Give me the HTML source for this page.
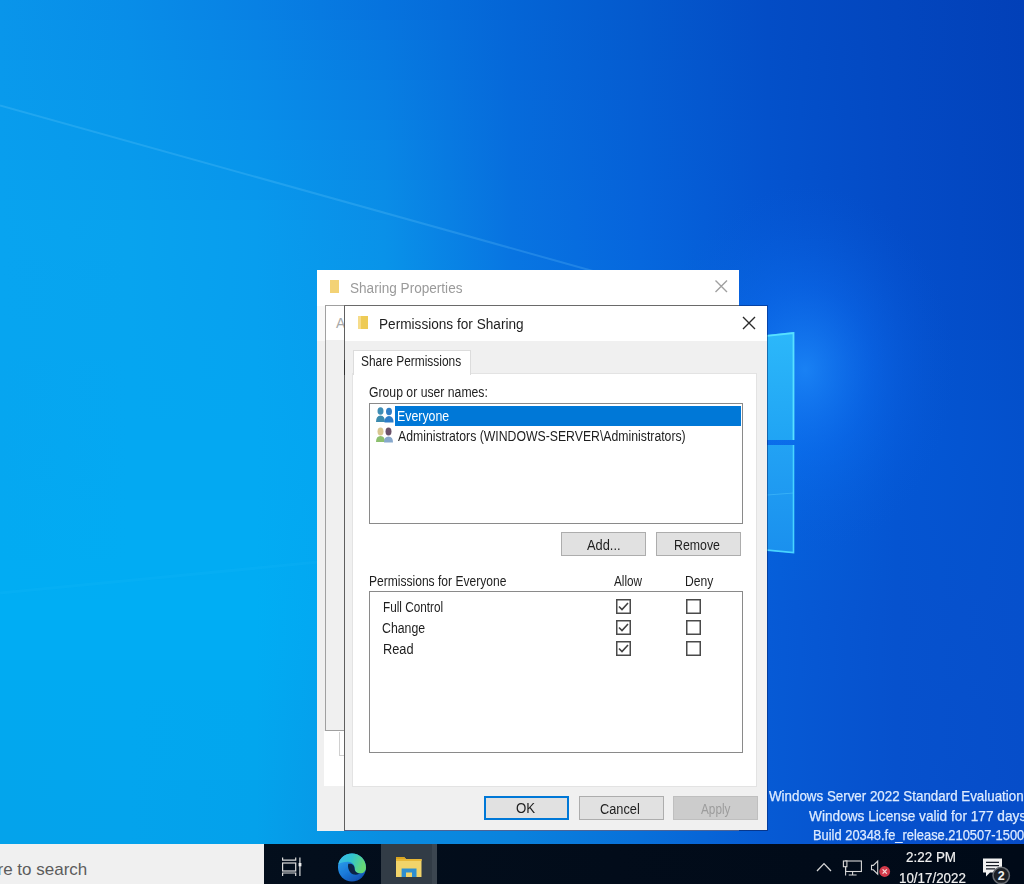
<!DOCTYPE html>
<html><head><meta charset="utf-8">
<style>
*{margin:0;padding:0;box-sizing:border-box}
html,body{width:1024px;height:884px;overflow:hidden}
body{position:relative;font-family:"Liberation Sans",sans-serif;background:#0a6fdc}
.abs{position:absolute}
#bg{position:absolute;left:0;top:0;width:1024px;height:844px;overflow:hidden;
 background:linear-gradient(90deg,#0b9cef 0%,#0a8fe9 25%,#0a74de 50%,#0858cf 75%,#064bc4 100%)}
.t{position:absolute;white-space:nowrap;transform-origin:0 0;line-height:1}
.ui{color:#1e1e1e;font-size:14px}
#tb{position:absolute;left:0;top:844px;width:1024px;height:40px;background:linear-gradient(90deg,#04101e,#020c1a 60%,#000a18)}
</style></head><body>
<div id="bg">
<svg width="1024" height="844" viewBox="0 0 1024 844" style="position:absolute;left:0;top:0">
<defs><linearGradient id="r0" x1="0" y1="0" x2="1" y2="0"><stop offset="0.000" stop-color="#0995ea"/><stop offset="0.125" stop-color="#088de8"/><stop offset="0.250" stop-color="#0881e4"/><stop offset="0.375" stop-color="#0673de"/><stop offset="0.500" stop-color="#0465d6"/><stop offset="0.625" stop-color="#0459cd"/><stop offset="0.750" stop-color="#034cc5"/><stop offset="0.875" stop-color="#0346be"/><stop offset="1.000" stop-color="#0240b8"/></linearGradient><linearGradient id="r1" x1="0" y1="0" x2="1" y2="0"><stop offset="0.000" stop-color="#0996eb"/><stop offset="0.125" stop-color="#088fe9"/><stop offset="0.250" stop-color="#0884e5"/><stop offset="0.375" stop-color="#0776df"/><stop offset="0.500" stop-color="#0566d7"/><stop offset="0.625" stop-color="#045ace"/><stop offset="0.750" stop-color="#034dc6"/><stop offset="0.875" stop-color="#0347bf"/><stop offset="1.000" stop-color="#0241b9"/></linearGradient><linearGradient id="r2" x1="0" y1="0" x2="1" y2="0"><stop offset="0.000" stop-color="#0997eb"/><stop offset="0.125" stop-color="#0891e9"/><stop offset="0.250" stop-color="#0886e6"/><stop offset="0.375" stop-color="#0779e0"/><stop offset="0.500" stop-color="#0567d8"/><stop offset="0.625" stop-color="#045bcf"/><stop offset="0.750" stop-color="#034ec7"/><stop offset="0.875" stop-color="#0347c0"/><stop offset="1.000" stop-color="#0241ba"/></linearGradient><linearGradient id="r3" x1="0" y1="0" x2="1" y2="0"><stop offset="0.000" stop-color="#0999ec"/><stop offset="0.125" stop-color="#0893ea"/><stop offset="0.250" stop-color="#0889e7"/><stop offset="0.375" stop-color="#077be1"/><stop offset="0.500" stop-color="#0568d9"/><stop offset="0.625" stop-color="#055cd1"/><stop offset="0.750" stop-color="#034fc8"/><stop offset="0.875" stop-color="#0348c1"/><stop offset="1.000" stop-color="#0242ba"/></linearGradient><linearGradient id="r4" x1="0" y1="0" x2="1" y2="0"><stop offset="0.000" stop-color="#099aec"/><stop offset="0.125" stop-color="#0895ea"/><stop offset="0.250" stop-color="#088be8"/><stop offset="0.375" stop-color="#087ee2"/><stop offset="0.500" stop-color="#0669da"/><stop offset="0.625" stop-color="#055dd2"/><stop offset="0.750" stop-color="#0350c9"/><stop offset="0.875" stop-color="#0348c2"/><stop offset="1.000" stop-color="#0242bb"/></linearGradient><linearGradient id="r5" x1="0" y1="0" x2="1" y2="0"><stop offset="0.000" stop-color="#099ced"/><stop offset="0.125" stop-color="#0897eb"/><stop offset="0.250" stop-color="#088de9"/><stop offset="0.375" stop-color="#0880e3"/><stop offset="0.500" stop-color="#066bdb"/><stop offset="0.625" stop-color="#055ed4"/><stop offset="0.750" stop-color="#0351cb"/><stop offset="0.875" stop-color="#0349c3"/><stop offset="1.000" stop-color="#0243bc"/></linearGradient><linearGradient id="r6" x1="0" y1="0" x2="1" y2="0"><stop offset="0.000" stop-color="#089ded"/><stop offset="0.125" stop-color="#0898eb"/><stop offset="0.250" stop-color="#0890ea"/><stop offset="0.375" stop-color="#0883e4"/><stop offset="0.500" stop-color="#066cdc"/><stop offset="0.625" stop-color="#055fd5"/><stop offset="0.750" stop-color="#0452cc"/><stop offset="0.875" stop-color="#0449c4"/><stop offset="1.000" stop-color="#0243bd"/></linearGradient><linearGradient id="r7" x1="0" y1="0" x2="1" y2="0"><stop offset="0.000" stop-color="#089eee"/><stop offset="0.125" stop-color="#089aec"/><stop offset="0.250" stop-color="#0892eb"/><stop offset="0.375" stop-color="#0986e5"/><stop offset="0.500" stop-color="#076ddd"/><stop offset="0.625" stop-color="#0560d6"/><stop offset="0.750" stop-color="#0453cd"/><stop offset="0.875" stop-color="#044ac5"/><stop offset="1.000" stop-color="#0244bd"/></linearGradient><linearGradient id="r8" x1="0" y1="0" x2="1" y2="0"><stop offset="0.000" stop-color="#08a0ee"/><stop offset="0.125" stop-color="#089cec"/><stop offset="0.250" stop-color="#0895eb"/><stop offset="0.375" stop-color="#0988e5"/><stop offset="0.500" stop-color="#076edd"/><stop offset="0.625" stop-color="#0561d8"/><stop offset="0.750" stop-color="#0453ce"/><stop offset="0.875" stop-color="#044ac5"/><stop offset="1.000" stop-color="#0244be"/></linearGradient><linearGradient id="r9" x1="0" y1="0" x2="1" y2="0"><stop offset="0.000" stop-color="#08a1ef"/><stop offset="0.125" stop-color="#089eed"/><stop offset="0.250" stop-color="#0897ec"/><stop offset="0.375" stop-color="#098be6"/><stop offset="0.500" stop-color="#0770de"/><stop offset="0.625" stop-color="#0662d9"/><stop offset="0.750" stop-color="#0454d0"/><stop offset="0.875" stop-color="#044bc6"/><stop offset="1.000" stop-color="#0245bf"/></linearGradient><linearGradient id="r10" x1="0" y1="0" x2="1" y2="0"><stop offset="0.000" stop-color="#08a3ef"/><stop offset="0.125" stop-color="#08a0ed"/><stop offset="0.250" stop-color="#089aed"/><stop offset="0.375" stop-color="#0a8de7"/><stop offset="0.500" stop-color="#0871df"/><stop offset="0.625" stop-color="#0663db"/><stop offset="0.750" stop-color="#0455d1"/><stop offset="0.875" stop-color="#044bc7"/><stop offset="1.000" stop-color="#0245bf"/></linearGradient><linearGradient id="r11" x1="0" y1="0" x2="1" y2="0"><stop offset="0.000" stop-color="#08a4f0"/><stop offset="0.125" stop-color="#08a2ee"/><stop offset="0.250" stop-color="#089cee"/><stop offset="0.375" stop-color="#0a90e8"/><stop offset="0.500" stop-color="#0872e0"/><stop offset="0.625" stop-color="#0664dc"/><stop offset="0.750" stop-color="#0456d2"/><stop offset="0.875" stop-color="#044cc8"/><stop offset="1.000" stop-color="#0246c0"/></linearGradient><linearGradient id="r12" x1="0" y1="0" x2="1" y2="0"><stop offset="0.000" stop-color="#08a4f0"/><stop offset="0.125" stop-color="#08a3ee"/><stop offset="0.250" stop-color="#089dee"/><stop offset="0.375" stop-color="#0992e9"/><stop offset="0.500" stop-color="#0874e1"/><stop offset="0.625" stop-color="#0666dd"/><stop offset="0.750" stop-color="#0458d4"/><stop offset="0.875" stop-color="#044dc9"/><stop offset="1.000" stop-color="#0247c1"/></linearGradient><linearGradient id="r13" x1="0" y1="0" x2="1" y2="0"><stop offset="0.000" stop-color="#08a4f0"/><stop offset="0.125" stop-color="#07a3ef"/><stop offset="0.250" stop-color="#079eef"/><stop offset="0.375" stop-color="#0994e9"/><stop offset="0.500" stop-color="#0876e2"/><stop offset="0.625" stop-color="#0668de"/><stop offset="0.750" stop-color="#045ad5"/><stop offset="0.875" stop-color="#044ecb"/><stop offset="1.000" stop-color="#0248c3"/></linearGradient><linearGradient id="r14" x1="0" y1="0" x2="1" y2="0"><stop offset="0.000" stop-color="#07a5f0"/><stop offset="0.125" stop-color="#07a4ef"/><stop offset="0.250" stop-color="#079fef"/><stop offset="0.375" stop-color="#0895ea"/><stop offset="0.500" stop-color="#0878e3"/><stop offset="0.625" stop-color="#0769df"/><stop offset="0.750" stop-color="#055bd7"/><stop offset="0.875" stop-color="#044fcc"/><stop offset="1.000" stop-color="#0349c4"/></linearGradient><linearGradient id="r15" x1="0" y1="0" x2="1" y2="0"><stop offset="0.000" stop-color="#07a5f0"/><stop offset="0.125" stop-color="#07a4ef"/><stop offset="0.250" stop-color="#07a0ef"/><stop offset="0.375" stop-color="#0897eb"/><stop offset="0.500" stop-color="#087ae4"/><stop offset="0.625" stop-color="#076be0"/><stop offset="0.750" stop-color="#055dd9"/><stop offset="0.875" stop-color="#0450cd"/><stop offset="1.000" stop-color="#034ac5"/></linearGradient><linearGradient id="r16" x1="0" y1="0" x2="1" y2="0"><stop offset="0.000" stop-color="#07a5f0"/><stop offset="0.125" stop-color="#06a5f0"/><stop offset="0.250" stop-color="#06a1f0"/><stop offset="0.375" stop-color="#0799ec"/><stop offset="0.500" stop-color="#087ce5"/><stop offset="0.625" stop-color="#076de1"/><stop offset="0.750" stop-color="#055fda"/><stop offset="0.875" stop-color="#0451ce"/><stop offset="1.000" stop-color="#034bc6"/></linearGradient><linearGradient id="r17" x1="0" y1="0" x2="1" y2="0"><stop offset="0.000" stop-color="#07a5f0"/><stop offset="0.125" stop-color="#06a5f0"/><stop offset="0.250" stop-color="#06a3f0"/><stop offset="0.375" stop-color="#079bec"/><stop offset="0.500" stop-color="#087ee5"/><stop offset="0.625" stop-color="#076fe1"/><stop offset="0.750" stop-color="#0561dc"/><stop offset="0.875" stop-color="#0453d0"/><stop offset="1.000" stop-color="#034dc8"/></linearGradient><linearGradient id="r18" x1="0" y1="0" x2="1" y2="0"><stop offset="0.000" stop-color="#07a5f0"/><stop offset="0.125" stop-color="#05a6f1"/><stop offset="0.250" stop-color="#05a4f1"/><stop offset="0.375" stop-color="#069ded"/><stop offset="0.500" stop-color="#0880e6"/><stop offset="0.625" stop-color="#0771e2"/><stop offset="0.750" stop-color="#0563dd"/><stop offset="0.875" stop-color="#0454d1"/><stop offset="1.000" stop-color="#034ec9"/></linearGradient><linearGradient id="r19" x1="0" y1="0" x2="1" y2="0"><stop offset="0.000" stop-color="#07a5f0"/><stop offset="0.125" stop-color="#05a6f1"/><stop offset="0.250" stop-color="#05a5f1"/><stop offset="0.375" stop-color="#069fee"/><stop offset="0.500" stop-color="#0882e7"/><stop offset="0.625" stop-color="#0773e3"/><stop offset="0.750" stop-color="#0565df"/><stop offset="0.875" stop-color="#0455d2"/><stop offset="1.000" stop-color="#034fca"/></linearGradient><linearGradient id="r20" x1="0" y1="0" x2="1" y2="0"><stop offset="0.000" stop-color="#06a6f0"/><stop offset="0.125" stop-color="#05a7f1"/><stop offset="0.250" stop-color="#05a6f1"/><stop offset="0.375" stop-color="#05a0ef"/><stop offset="0.500" stop-color="#0884e8"/><stop offset="0.625" stop-color="#0874e4"/><stop offset="0.750" stop-color="#0666e1"/><stop offset="0.875" stop-color="#0456d3"/><stop offset="1.000" stop-color="#0450cb"/></linearGradient><linearGradient id="r21" x1="0" y1="0" x2="1" y2="0"><stop offset="0.000" stop-color="#06a6f0"/><stop offset="0.125" stop-color="#04a7f2"/><stop offset="0.250" stop-color="#04a7f2"/><stop offset="0.375" stop-color="#05a2ef"/><stop offset="0.500" stop-color="#0886e9"/><stop offset="0.625" stop-color="#0876e5"/><stop offset="0.750" stop-color="#0668e2"/><stop offset="0.875" stop-color="#0457d5"/><stop offset="1.000" stop-color="#0451cd"/></linearGradient><linearGradient id="r22" x1="0" y1="0" x2="1" y2="0"><stop offset="0.000" stop-color="#06a6f0"/><stop offset="0.125" stop-color="#04a8f2"/><stop offset="0.250" stop-color="#04a8f2"/><stop offset="0.375" stop-color="#04a4f0"/><stop offset="0.500" stop-color="#0888ea"/><stop offset="0.625" stop-color="#0878e6"/><stop offset="0.750" stop-color="#066ae4"/><stop offset="0.875" stop-color="#0458d6"/><stop offset="1.000" stop-color="#0452ce"/></linearGradient><linearGradient id="r23" x1="0" y1="0" x2="1" y2="0"><stop offset="0.000" stop-color="#05a7f0"/><stop offset="0.125" stop-color="#04a9f2"/><stop offset="0.250" stop-color="#04a9f2"/><stop offset="0.375" stop-color="#04a4f0"/><stop offset="0.500" stop-color="#0888ea"/><stop offset="0.625" stop-color="#0877e5"/><stop offset="0.750" stop-color="#0668e2"/><stop offset="0.875" stop-color="#0457d5"/><stop offset="1.000" stop-color="#0452ce"/></linearGradient><linearGradient id="r24" x1="0" y1="0" x2="1" y2="0"><stop offset="0.000" stop-color="#05a8f1"/><stop offset="0.125" stop-color="#03a9f2"/><stop offset="0.250" stop-color="#03a9f2"/><stop offset="0.375" stop-color="#04a4f0"/><stop offset="0.500" stop-color="#0888ea"/><stop offset="0.625" stop-color="#0876e5"/><stop offset="0.750" stop-color="#0666e1"/><stop offset="0.875" stop-color="#0457d4"/><stop offset="1.000" stop-color="#0452ce"/></linearGradient><linearGradient id="r25" x1="0" y1="0" x2="1" y2="0"><stop offset="0.000" stop-color="#04a9f1"/><stop offset="0.125" stop-color="#03aaf3"/><stop offset="0.250" stop-color="#03aaf3"/><stop offset="0.375" stop-color="#04a4f0"/><stop offset="0.500" stop-color="#0888e9"/><stop offset="0.625" stop-color="#0775e4"/><stop offset="0.750" stop-color="#0664df"/><stop offset="0.875" stop-color="#0556d3"/><stop offset="1.000" stop-color="#0551cd"/></linearGradient><linearGradient id="r26" x1="0" y1="0" x2="1" y2="0"><stop offset="0.000" stop-color="#03aaf2"/><stop offset="0.125" stop-color="#02abf3"/><stop offset="0.250" stop-color="#02abf3"/><stop offset="0.375" stop-color="#04a4f0"/><stop offset="0.500" stop-color="#0888e9"/><stop offset="0.625" stop-color="#0774e3"/><stop offset="0.750" stop-color="#0662dd"/><stop offset="0.875" stop-color="#0555d2"/><stop offset="1.000" stop-color="#0551cd"/></linearGradient><linearGradient id="r27" x1="0" y1="0" x2="1" y2="0"><stop offset="0.000" stop-color="#02abf2"/><stop offset="0.125" stop-color="#02acf3"/><stop offset="0.250" stop-color="#02acf3"/><stop offset="0.375" stop-color="#04a4f0"/><stop offset="0.500" stop-color="#0888e9"/><stop offset="0.625" stop-color="#0773e2"/><stop offset="0.750" stop-color="#0661dc"/><stop offset="0.875" stop-color="#0554d1"/><stop offset="1.000" stop-color="#0551cd"/></linearGradient><linearGradient id="r28" x1="0" y1="0" x2="1" y2="0"><stop offset="0.000" stop-color="#02acf3"/><stop offset="0.125" stop-color="#01acf3"/><stop offset="0.250" stop-color="#01acf3"/><stop offset="0.375" stop-color="#04a4f0"/><stop offset="0.500" stop-color="#0888e9"/><stop offset="0.625" stop-color="#0772e2"/><stop offset="0.750" stop-color="#065fda"/><stop offset="0.875" stop-color="#0554d0"/><stop offset="1.000" stop-color="#0551cd"/></linearGradient><linearGradient id="r29" x1="0" y1="0" x2="1" y2="0"><stop offset="0.000" stop-color="#01adf3"/><stop offset="0.125" stop-color="#01adf4"/><stop offset="0.250" stop-color="#01adf4"/><stop offset="0.375" stop-color="#04a4f0"/><stop offset="0.500" stop-color="#0888e8"/><stop offset="0.625" stop-color="#0671e1"/><stop offset="0.750" stop-color="#065dd8"/><stop offset="0.875" stop-color="#0653cf"/><stop offset="1.000" stop-color="#0650cc"/></linearGradient><linearGradient id="r30" x1="0" y1="0" x2="1" y2="0"><stop offset="0.000" stop-color="#00aef4"/><stop offset="0.125" stop-color="#00aef4"/><stop offset="0.250" stop-color="#00aef4"/><stop offset="0.375" stop-color="#04a4f0"/><stop offset="0.500" stop-color="#0888e8"/><stop offset="0.625" stop-color="#0670e0"/><stop offset="0.750" stop-color="#065bd7"/><stop offset="0.875" stop-color="#0652ce"/><stop offset="1.000" stop-color="#0650cc"/></linearGradient><linearGradient id="r31" x1="0" y1="0" x2="1" y2="0"><stop offset="0.000" stop-color="#00adf4"/><stop offset="0.125" stop-color="#00adf4"/><stop offset="0.250" stop-color="#00adf4"/><stop offset="0.375" stop-color="#04a3ef"/><stop offset="0.500" stop-color="#0888e7"/><stop offset="0.625" stop-color="#0670e0"/><stop offset="0.750" stop-color="#065ad6"/><stop offset="0.875" stop-color="#0652ce"/><stop offset="1.000" stop-color="#0650cc"/></linearGradient><linearGradient id="r32" x1="0" y1="0" x2="1" y2="0"><stop offset="0.000" stop-color="#01acf3"/><stop offset="0.125" stop-color="#01acf3"/><stop offset="0.250" stop-color="#01acf3"/><stop offset="0.375" stop-color="#05a1ee"/><stop offset="0.500" stop-color="#0887e6"/><stop offset="0.625" stop-color="#0670df"/><stop offset="0.750" stop-color="#065ad6"/><stop offset="0.875" stop-color="#0652ce"/><stop offset="1.000" stop-color="#064fcb"/></linearGradient><linearGradient id="r33" x1="0" y1="0" x2="1" y2="0"><stop offset="0.000" stop-color="#01abf2"/><stop offset="0.125" stop-color="#01abf2"/><stop offset="0.250" stop-color="#01abf2"/><stop offset="0.375" stop-color="#059fec"/><stop offset="0.500" stop-color="#0887e5"/><stop offset="0.625" stop-color="#0670df"/><stop offset="0.750" stop-color="#065ad6"/><stop offset="0.875" stop-color="#0652ce"/><stop offset="1.000" stop-color="#064fcb"/></linearGradient><linearGradient id="r34" x1="0" y1="0" x2="1" y2="0"><stop offset="0.000" stop-color="#01aaf1"/><stop offset="0.125" stop-color="#01aaf2"/><stop offset="0.250" stop-color="#01aaf1"/><stop offset="0.375" stop-color="#069ceb"/><stop offset="0.500" stop-color="#0986e4"/><stop offset="0.625" stop-color="#0770de"/><stop offset="0.750" stop-color="#065ad5"/><stop offset="0.875" stop-color="#0651cd"/><stop offset="1.000" stop-color="#064fcb"/></linearGradient><linearGradient id="r35" x1="0" y1="0" x2="1" y2="0"><stop offset="0.000" stop-color="#02a9f0"/><stop offset="0.125" stop-color="#02a9f1"/><stop offset="0.250" stop-color="#02a8f0"/><stop offset="0.375" stop-color="#069aea"/><stop offset="0.500" stop-color="#0986e3"/><stop offset="0.625" stop-color="#0770de"/><stop offset="0.750" stop-color="#065ad5"/><stop offset="0.875" stop-color="#0651cd"/><stop offset="1.000" stop-color="#064eca"/></linearGradient><linearGradient id="r36" x1="0" y1="0" x2="1" y2="0"><stop offset="0.000" stop-color="#02a8ef"/><stop offset="0.125" stop-color="#02a8f0"/><stop offset="0.250" stop-color="#02a7ef"/><stop offset="0.375" stop-color="#0798e8"/><stop offset="0.500" stop-color="#0985e2"/><stop offset="0.625" stop-color="#0770dd"/><stop offset="0.750" stop-color="#065ad5"/><stop offset="0.875" stop-color="#0651cd"/><stop offset="1.000" stop-color="#064eca"/></linearGradient><linearGradient id="r37" x1="0" y1="0" x2="1" y2="0"><stop offset="0.000" stop-color="#02a7ee"/><stop offset="0.125" stop-color="#02a7ef"/><stop offset="0.250" stop-color="#02a6ee"/><stop offset="0.375" stop-color="#0796e7"/><stop offset="0.500" stop-color="#0985e1"/><stop offset="0.625" stop-color="#0770dd"/><stop offset="0.750" stop-color="#065ad5"/><stop offset="0.875" stop-color="#0651cd"/><stop offset="1.000" stop-color="#064eca"/></linearGradient><linearGradient id="r38" x1="0" y1="0" x2="1" y2="0"><stop offset="0.000" stop-color="#03a6ed"/><stop offset="0.125" stop-color="#03a6ef"/><stop offset="0.250" stop-color="#03a5ed"/><stop offset="0.375" stop-color="#0894e5"/><stop offset="0.500" stop-color="#0984e0"/><stop offset="0.625" stop-color="#0770dc"/><stop offset="0.750" stop-color="#065ad5"/><stop offset="0.875" stop-color="#0651cd"/><stop offset="1.000" stop-color="#064dc9"/></linearGradient><linearGradient id="r39" x1="0" y1="0" x2="1" y2="0"><stop offset="0.000" stop-color="#03a5ec"/><stop offset="0.125" stop-color="#03a5ee"/><stop offset="0.250" stop-color="#03a3ec"/><stop offset="0.375" stop-color="#0992e4"/><stop offset="0.500" stop-color="#0a83df"/><stop offset="0.625" stop-color="#0870db"/><stop offset="0.750" stop-color="#065ad4"/><stop offset="0.875" stop-color="#0650cc"/><stop offset="1.000" stop-color="#064dc9"/></linearGradient><linearGradient id="r40" x1="0" y1="0" x2="1" y2="0"><stop offset="0.000" stop-color="#03a4ec"/><stop offset="0.125" stop-color="#03a4ed"/><stop offset="0.250" stop-color="#03a2ec"/><stop offset="0.375" stop-color="#0990e2"/><stop offset="0.500" stop-color="#0a83de"/><stop offset="0.625" stop-color="#0870db"/><stop offset="0.750" stop-color="#065ad4"/><stop offset="0.875" stop-color="#0650cc"/><stop offset="1.000" stop-color="#064dc9"/></linearGradient><linearGradient id="r41" x1="0" y1="0" x2="1" y2="0"><stop offset="0.000" stop-color="#04a3eb"/><stop offset="0.125" stop-color="#04a3ec"/><stop offset="0.250" stop-color="#04a1eb"/><stop offset="0.375" stop-color="#0a8ee1"/><stop offset="0.500" stop-color="#0a82dd"/><stop offset="0.625" stop-color="#0870da"/><stop offset="0.750" stop-color="#065ad4"/><stop offset="0.875" stop-color="#0650cc"/><stop offset="1.000" stop-color="#064cc8"/></linearGradient><linearGradient id="r42" x1="0" y1="0" x2="1" y2="0"><stop offset="0.000" stop-color="#04a2ea"/><stop offset="0.125" stop-color="#04a2ec"/><stop offset="0.250" stop-color="#04a0ea"/><stop offset="0.375" stop-color="#0a8ce0"/><stop offset="0.500" stop-color="#0a82dc"/><stop offset="0.625" stop-color="#0870da"/><stop offset="0.750" stop-color="#065ad4"/><stop offset="0.875" stop-color="#0650cc"/><stop offset="1.000" stop-color="#064cc8"/></linearGradient></defs><rect x="0" y="0" width="1024" height="21" fill="url(#r0)"/><rect x="0" y="20" width="1024" height="21" fill="url(#r1)"/><rect x="0" y="40" width="1024" height="21" fill="url(#r2)"/><rect x="0" y="60" width="1024" height="21" fill="url(#r3)"/><rect x="0" y="80" width="1024" height="21" fill="url(#r4)"/><rect x="0" y="100" width="1024" height="21" fill="url(#r5)"/><rect x="0" y="120" width="1024" height="21" fill="url(#r6)"/><rect x="0" y="140" width="1024" height="21" fill="url(#r7)"/><rect x="0" y="160" width="1024" height="21" fill="url(#r8)"/><rect x="0" y="180" width="1024" height="21" fill="url(#r9)"/><rect x="0" y="200" width="1024" height="21" fill="url(#r10)"/><rect x="0" y="220" width="1024" height="21" fill="url(#r11)"/><rect x="0" y="240" width="1024" height="21" fill="url(#r12)"/><rect x="0" y="260" width="1024" height="21" fill="url(#r13)"/><rect x="0" y="280" width="1024" height="21" fill="url(#r14)"/><rect x="0" y="300" width="1024" height="21" fill="url(#r15)"/><rect x="0" y="320" width="1024" height="21" fill="url(#r16)"/><rect x="0" y="340" width="1024" height="21" fill="url(#r17)"/><rect x="0" y="360" width="1024" height="21" fill="url(#r18)"/><rect x="0" y="380" width="1024" height="21" fill="url(#r19)"/><rect x="0" y="400" width="1024" height="21" fill="url(#r20)"/><rect x="0" y="420" width="1024" height="21" fill="url(#r21)"/><rect x="0" y="440" width="1024" height="21" fill="url(#r22)"/><rect x="0" y="460" width="1024" height="21" fill="url(#r23)"/><rect x="0" y="480" width="1024" height="21" fill="url(#r24)"/><rect x="0" y="500" width="1024" height="21" fill="url(#r25)"/><rect x="0" y="520" width="1024" height="21" fill="url(#r26)"/><rect x="0" y="540" width="1024" height="21" fill="url(#r27)"/><rect x="0" y="560" width="1024" height="21" fill="url(#r28)"/><rect x="0" y="580" width="1024" height="21" fill="url(#r29)"/><rect x="0" y="600" width="1024" height="21" fill="url(#r30)"/><rect x="0" y="620" width="1024" height="21" fill="url(#r31)"/><rect x="0" y="640" width="1024" height="21" fill="url(#r32)"/><rect x="0" y="660" width="1024" height="21" fill="url(#r33)"/><rect x="0" y="680" width="1024" height="21" fill="url(#r34)"/><rect x="0" y="700" width="1024" height="21" fill="url(#r35)"/><rect x="0" y="720" width="1024" height="21" fill="url(#r36)"/><rect x="0" y="740" width="1024" height="21" fill="url(#r37)"/><rect x="0" y="760" width="1024" height="21" fill="url(#r38)"/><rect x="0" y="780" width="1024" height="21" fill="url(#r39)"/><rect x="0" y="800" width="1024" height="21" fill="url(#r40)"/><rect x="0" y="820" width="1024" height="21" fill="url(#r41)"/><rect x="0" y="840" width="1024" height="21" fill="url(#r42)"/>
 <defs>
  <radialGradient id="glow" cx="805" cy="370" r="150" gradientUnits="userSpaceOnUse" gradientTransform="translate(805 370) scale(1 1.25) translate(-805 -370)">
   <stop offset="0" stop-color="#2290ff" stop-opacity="0.7"/>
   <stop offset="0.45" stop-color="#1274f8" stop-opacity="0.32"/>
   <stop offset="1" stop-color="#0a5ad8" stop-opacity="0"/>
  </radialGradient>
  <linearGradient id="pane" x1="0" y1="0" x2="0" y2="1">
   <stop offset="0" stop-color="#2cb8fa"/>
   <stop offset="1" stop-color="#20a4f4"/>
  </linearGradient>
  <linearGradient id="pane2" x1="0" y1="0" x2="0" y2="1">
   <stop offset="0" stop-color="#22a2f4"/>
   <stop offset="1" stop-color="#1a90ee"/>
  </linearGradient>
 </defs>
 <rect width="1024" height="844" fill="url(#glow)"/>
 <line x1="0" y1="105.5" x2="600" y2="273" stroke="#80d8ff" stroke-opacity="0.2" stroke-width="2"/>
 <line x1="0" y1="593" x2="700" y2="525" stroke="#40d0ff" stroke-opacity="0.08" stroke-width="3"/>
 <polygon points="700,342 794,332 794,440 700,440" fill="url(#pane)"/>
 <polygon points="700,445 794,445 794,553 700,544" fill="url(#pane2)"/>
 <line x1="700" y1="500" x2="794" y2="493" stroke="#5ad0ff" stroke-opacity="0.4" stroke-width="1"/>
 <polyline points="700,343 793.5,333 793.5,440" fill="none" stroke="#58e0ff" stroke-width="1.8"/>
 <polyline points="793.5,445 793.5,552.5 700,544" fill="none" stroke="#48d4ff" stroke-width="1.6"/>
</svg>
</div>

<!-- back dialog: Sharing Properties -->
<div class="abs" style="left:317px;top:270px;width:422px;height:561px;background:#f0f0f0"></div>
<div class="abs" style="left:317px;top:270px;width:422px;height:36px;background:#fff"></div>
<div class="abs" style="left:317px;top:306px;width:9px;height:35px;background:#f8f8f8"></div>
<div class="abs" style="left:330px;top:280px;width:9px;height:13px;background:#f3d275"></div>
<div class="t" id="t_sp" style="left:350px;top:281px;font-size:14px;color:#9a9a9a;transform:scaleX(0.97)">Sharing Properties</div>
<svg class="abs" style="left:710px;top:275px" width="22" height="22"><path d="M5.5 5.5L17 17M17 5.5L5.5 17" stroke="#a0a0a0" stroke-width="1.4"/></svg>
<!-- back dialog inner panel left strip -->
<div class="abs" style="left:325px;top:305px;width:21px;height:426px;border-left:1px solid #a0a0a0;border-top:1px solid #a0a0a0;background:#f0f0f0"></div>
<div class="abs" style="left:326px;top:306px;width:18px;height:34px;background:#fff"></div>
<div class="t" style="left:336px;top:316px;font-size:14px;color:#a8a8a8">A</div>
<div class="abs" style="left:325px;top:730px;width:20px;height:1px;background:#a0a0a0"></div>
<div class="abs" style="left:324px;top:731px;width:21px;height:55px;background:#fff"></div>
<div class="abs" style="left:339px;top:732px;width:6px;height:24px;border-left:1px solid #d0d0d0;border-bottom:1px solid #d0d0d0"></div>

<!-- front dialog -->
<div class="abs" style="left:344px;top:305px;width:424px;height:526px;background:#f0f0f0;background-clip:padding-box;border-left:1px solid #5f5f5f;border-top:1px solid rgba(0,25,90,.45);border-bottom:1px solid rgba(10,40,110,.7);border-right:1px solid rgba(0,25,90,.45)"></div>
<div class="abs" style="left:344px;top:305px;width:395px;height:1px;background:#6a6a6a"></div>
<div class="abs" style="left:344px;top:360px;width:1px;height:15px;background:#303030"></div>
<div class="abs" style="left:345px;top:306px;width:422px;height:35px;background:#fff"></div>
<div class="abs" style="left:358px;top:316px;width:10px;height:13px;background:#eecb56"></div>
<div class="abs" style="left:358px;top:316px;width:3px;height:13px;background:#f6dc8a"></div>
<div class="t ui" id="t_pfs" style="left:379px;top:317px;font-size:14px;transform:scaleX(0.973)">Permissions for Sharing</div>
<svg class="abs" style="left:738px;top:312px" width="22" height="22"><path d="M5 5L17 17M17 5L5 17" stroke="#2a2a2a" stroke-width="1.4"/></svg>

<!-- tab -->
<div class="abs" style="left:352px;top:373px;width:405px;height:414px;background:#fff;border:1px solid #e3e3e3"></div>
<div class="abs" style="left:353px;top:350px;width:118px;height:25px;background:#fff;border:1px solid #dcdcdc;border-bottom:none"></div>
<div class="t ui" id="t_shp" style="left:361px;top:354px;transform:scaleX(0.853)">Share Permissions</div>

<div class="t ui" id="t_gun" style="left:369px;top:384.5px;transform:scaleX(0.873)">Group or user names:</div>
<div class="abs" style="left:369px;top:403px;width:374px;height:121px;background:#fff;border:1px solid #8a8a8a"></div>
<div class="abs" style="left:395px;top:406px;width:346px;height:20px;background:#0078d7"></div>
<svg class="abs" style="left:375px;top:406px" width="21" height="18" viewBox="0 0 21 18">
 <ellipse cx="5.5" cy="5" rx="3" ry="3.8" fill="#3f8db5"/>
 <path d="M1 16 Q1 9.5 5.5 9.5 Q10 9.5 10 16 Z" fill="#3b8aae"/>
 <ellipse cx="14" cy="5.5" rx="3" ry="3.8" fill="#2f7ec6"/>
 <path d="M9.5 16.5 Q9.5 10 14 10 Q18.5 10 18.5 16.5 Z" fill="#2b7cc8"/>
</svg>
<div class="t" id="t_ev" style="left:397px;top:408.5px;font-size:14px;color:#fff;transform:scaleX(0.883)">Everyone</div>
<svg class="abs" style="left:375px;top:426px" width="21" height="18" viewBox="0 0 21 18">
 <ellipse cx="5.5" cy="5.5" rx="3" ry="4" fill="#d8c690"/>
 <path d="M1 16 Q1 10 5.5 10 Q10 10 10 16 Z" fill="#8cbf6e"/>
 <ellipse cx="13.5" cy="5.5" rx="3" ry="4" fill="#6a5068"/>
 <path d="M9 16.5 Q9 10.5 13.5 10.5 Q18 10.5 18 16.5 Z" fill="#86a8cc"/>
</svg>
<div class="t ui" id="t_adm" style="left:397.5px;top:429px;transform:scaleX(0.875)">Administrators (WINDOWS-SERVER\Administrators)</div>

<div class="abs" style="left:561px;top:532px;width:85px;height:24px;background:#e1e1e1;border:1px solid #adadad"></div>
<div class="t ui" id="t_add" style="left:587px;top:538px;transform:scaleX(0.917)">Add...</div>
<div class="abs" style="left:656px;top:532px;width:85px;height:24px;background:#e1e1e1;border:1px solid #adadad"></div>
<div class="t ui" id="t_rem" style="left:674px;top:537.5px;transform:scaleX(0.882)">Remove</div>

<div class="t ui" id="t_pfe" style="left:369px;top:574px;transform:scaleX(0.861)">Permissions for Everyone</div>
<div class="t ui" id="t_allow" style="left:614px;top:574px;transform:scaleX(0.84)">Allow</div>
<div class="t ui" id="t_deny" style="left:685px;top:574px;transform:scaleX(0.866)">Deny</div>
<div class="abs" style="left:369px;top:591px;width:374px;height:162px;background:#fff;border:1px solid #8a8a8a"></div>
<div class="t ui" id="t_fc" style="left:383px;top:599.5px;transform:scaleX(0.841)">Full Control</div>
<div class="t ui" id="t_ch" style="left:382px;top:620.5px;transform:scaleX(0.879)">Change</div>
<div class="t ui" id="t_rd" style="left:383px;top:641.5px;transform:scaleX(0.914)">Read</div>
<svg class="abs" style="left:616px;top:599px" width="15" height="15"><rect x="0.75" y="0.75" width="13.5" height="13.5" fill="#fff" stroke="#4a4a4a" stroke-width="1.5"/><path d="M3 7.5L6 10.5L12 4" fill="none" stroke="#404040" stroke-width="1.6"/></svg>
<svg class="abs" style="left:686px;top:599px" width="15" height="15"><rect x="0.75" y="0.75" width="13.5" height="13.5" fill="#fff" stroke="#4a4a4a" stroke-width="1.5"/></svg>
<svg class="abs" style="left:616px;top:620px" width="15" height="15"><rect x="0.75" y="0.75" width="13.5" height="13.5" fill="#fff" stroke="#4a4a4a" stroke-width="1.5"/><path d="M3 7.5L6 10.5L12 4" fill="none" stroke="#404040" stroke-width="1.6"/></svg>
<svg class="abs" style="left:686px;top:620px" width="15" height="15"><rect x="0.75" y="0.75" width="13.5" height="13.5" fill="#fff" stroke="#4a4a4a" stroke-width="1.5"/></svg>
<svg class="abs" style="left:616px;top:641px" width="15" height="15"><rect x="0.75" y="0.75" width="13.5" height="13.5" fill="#fff" stroke="#4a4a4a" stroke-width="1.5"/><path d="M3 7.5L6 10.5L12 4" fill="none" stroke="#404040" stroke-width="1.6"/></svg>
<svg class="abs" style="left:686px;top:641px" width="15" height="15"><rect x="0.75" y="0.75" width="13.5" height="13.5" fill="#fff" stroke="#4a4a4a" stroke-width="1.5"/></svg>


<div class="abs" style="left:484px;top:796px;width:85px;height:24px;background:#e1e1e1;border:2px solid #0078d7"></div>
<div class="t ui" id="t_ok" style="left:516px;top:801px;transform:scaleX(0.947)">OK</div>
<div class="abs" style="left:579px;top:796px;width:85px;height:24px;background:#e1e1e1;border:1px solid #adadad"></div>
<div class="t ui" id="t_cancel" style="left:600px;top:801.5px;transform:scaleX(0.914)">Cancel</div>
<div class="abs" style="left:673px;top:796px;width:85px;height:24px;background:#cccccc;border:1px solid #bfbfbf"></div>
<div class="t" id="t_apply" style="left:701px;top:801.5px;font-size:14px;color:#9c9c9c;transform:scaleX(0.84)">Apply</div>

<!-- watermark -->
<div class="t" id="w1" style="left:769px;top:789px;font-size:14px;color:#dceaff;-webkit-text-stroke:0.25px #dceaff;transform:scaleX(0.954)">Windows Server 2022 Standard Evaluation</div>
<div class="t" id="w2" style="left:809px;top:809px;font-size:14px;color:#dceaff;-webkit-text-stroke:0.25px #dceaff;transform:scaleX(0.976)">Windows License valid for 177 days</div>
<div class="t" id="w3" style="left:813px;top:828px;font-size:14px;color:#dceaff;-webkit-text-stroke:0.25px #dceaff;transform:scaleX(0.92)">Build 20348.fe_release.210507-1500</div>

<!-- taskbar -->
<div id="tb"></div>
<div class="abs" style="left:0;top:844px;width:264px;height:40px;background:#f0f0f0"></div>
<div class="t" id="srch" style="left:-2.5px;top:860.5px;font-size:17px;color:#5c5c5c">re to search</div>
<!-- task view -->
<svg class="abs" style="left:278px;top:852px" width="30" height="30" viewBox="0 0 30 30">
 <g fill="none" stroke="#dcdcdc" stroke-width="1.2">
  <path d="M4.6 5.5V8.2H17.7V5.5"/>
  <rect x="4.6" y="11" width="13.1" height="8"/>
  <path d="M4.6 24V21H17.7V24"/>
  <path d="M21.9 5.5V24"/>
 </g>
 <rect x="20.6" y="11" width="2.8" height="3.3" fill="#f0f0f0"/>
</svg>
<!-- edge -->
<svg class="abs" style="left:334px;top:850px" width="36" height="34" viewBox="0 0 36 34">
 <defs>
  <linearGradient id="eb" x1="0.2" y1="0.2" x2="0.7" y2="1"><stop offset="0" stop-color="#2a9ae8"/><stop offset="0.5" stop-color="#1a78d8"/><stop offset="1" stop-color="#1050b0"/></linearGradient>
  <linearGradient id="eg" x1="0" y1="0" x2="1" y2="0.3"><stop offset="0" stop-color="#3cb8ec"/><stop offset="0.5" stop-color="#30c4d0"/><stop offset="1" stop-color="#66d874"/></linearGradient>
  <filter id="eblur" x="-10%" y="-10%" width="120%" height="120%"><feGaussianBlur stdDeviation="0.5"/></filter>
 </defs>
 <g filter="url(#eblur)">
 <circle cx="18" cy="17.5" r="14" fill="url(#eb)"/>
 <path d="M4.2 14.5C5.5 8 11 3.5 18 3.5C25.7 3.5 32 9.8 32 17.5C32 21 29.8 23.3 26.2 23.3C22.6 23.3 20.6 21.2 20.6 18.2C20.6 14.5 18 12 14.2 11.8C10.2 11.6 6.5 12.6 4.2 14.5Z" fill="url(#eg)"/>
 <path d="M14.2 13.8C17.8 13 20.6 15.2 20.6 18.2C20.6 21.2 22.6 23.3 26.2 23.6C23.2 25.3 18.6 25 16.4 22.5C14.3 20.2 13.6 16.4 14.2 13.8Z" fill="#0a2444"/>
 </g>
</svg>
<!-- explorer -->
<div class="abs" style="left:381px;top:844px;width:56px;height:40px;background:#323c46"></div>
<div class="abs" style="left:432px;top:844px;width:5px;height:40px;background:#3c4650"></div>
<svg class="abs" style="left:394px;top:854px" width="30" height="26" viewBox="0 0 30 26">
 <path d="M2 3H10L12 5H27.5V23H2Z" fill="#f2d46a"/>
 <path d="M2 3H10L12 5H2Z" fill="#d9a521"/>
 <rect x="2" y="5" width="25.5" height="2" fill="#e8b838"/>
 <path d="M7.6 23V14.5H22.5V23H18V18.5H12V23Z" fill="#2f8fd0"/>
</svg>
<!-- tray -->
<svg class="abs" style="left:812px;top:856px" width="24" height="20" viewBox="0 0 24 20">
 <path d="M5 15L12 7.6L19 15" fill="none" stroke="#d6d6d6" stroke-width="1.3"/>
</svg>
<svg class="abs" style="left:840px;top:856px" width="26" height="24" viewBox="0 0 26 24">
 <g fill="none" stroke="#d8d8d8" stroke-width="1.1">
  <rect x="5.6" y="5" width="15.8" height="10.5"/>
  <path d="M12.6 15.5V19M8.7 19H16.6"/>
  <rect x="3.4" y="5" width="3.5" height="5.7" fill="#0a1220"/>
  <path d="M5.6 10.7V19.5"/>
 </g>
</svg>
<svg class="abs" style="left:868px;top:856px" width="26" height="26" viewBox="0 0 26 26">
 <path d="M3.5 9.4H5.3L9.7 5V18.2L5.3 13.8H3.5Z" fill="none" stroke="#d8d8d8" stroke-width="1.1"/>
 <circle cx="16.7" cy="15.5" r="5.4" fill="#d33a4a"/>
 <path d="M14.6 13.4L18.8 17.6M18.8 13.4L14.6 17.6" stroke="#f6dede" stroke-width="1.3"/>
</svg>
<div class="t" id="clk1" style="left:906px;top:850px;font-size:14px;color:#f0f0f0;-webkit-text-stroke:0.2px #f0f0f0;transform:scaleX(0.96)">2:22 PM</div>
<div class="t" id="clk2" style="left:898.5px;top:870.5px;font-size:14px;color:#f0f0f0;-webkit-text-stroke:0.2px #f0f0f0;transform:scaleX(0.955)">10/17/2022</div>
<svg class="abs" style="left:978px;top:854px" width="46" height="30" viewBox="0 0 46 30">
 <path d="M5 4.4H24V18.5H12L8 22.5V18.5H5Z" fill="#f2f2f2"/>
 <path d="M8 8.4H21M8 11.6H21M8 14.9H17" stroke="#1a1f28" stroke-width="1.3"/>
 <circle cx="23.2" cy="21.4" r="8.2" fill="#1c2026" stroke="#6a6e74" stroke-width="1.5"/>
 <text x="23.2" y="26" text-anchor="middle" font-family="Liberation Sans" font-weight="bold" font-size="12.5" fill="#f0f0f0">2</text>
</svg>
</body></html>
